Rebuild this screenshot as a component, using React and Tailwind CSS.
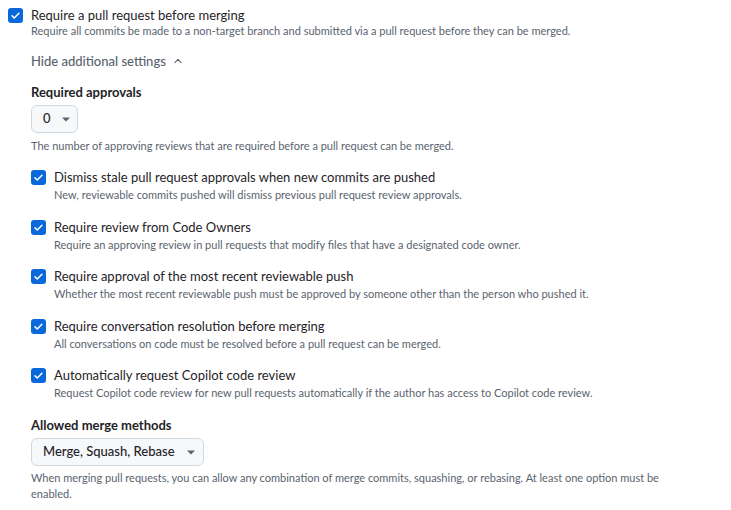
import React from "react";

function Check({ className = "" }) {
  return (
    <span className={`flex h-[15px] w-[15px] shrink-0 items-center justify-center rounded-[3px] bg-[#0969da] ${className}`}>
      <svg width="11" height="11" viewBox="0 0 16 16" fill="none">
        <path d="M3 8.5l3.2 3.2L13 4.8" stroke="white" strokeWidth="2.2" strokeLinecap="round" strokeLinejoin="round" />
      </svg>
    </span>
  );
}

function Caret() {
  return (
    <svg width="8" height="5" viewBox="0 0 8 5" className="shrink-0">
      <path d="M0 0.5h8L4 4.5z" fill="#59636e" />
    </svg>
  );
}

const rows = [
  ["Dismiss stale pull request approvals when new commits are pushed", "New, reviewable commits pushed will dismiss previous pull request review approvals."],
  ["Require review from Code Owners", "Require an approving review in pull requests that modify files that have a designated code owner."],
  ["Require approval of the most recent reviewable push", "Whether the most recent reviewable push must be approved by someone other than the person who pushed it."],
  ["Require conversation resolution before merging", "All conversations on code must be resolved before a pull request can be merged."],
  ["Automatically request Copilot code review", "Request Copilot code review for new pull requests automatically if the author has access to Copilot code review."],
];

export default function App() {
  return (
    <div className="h-[510px] w-[731px] overflow-hidden bg-white text-[#1f2328]" style={{ fontFamily: "Lato, sans-serif" }}>
      <div className="flex gap-[8px] pl-[8px] pt-[7px]">
        <Check className="mt-[1px]" />
        <div>
          <div className="text-[13px] leading-[16px]">Require a pull request before merging</div>
          <div className="text-[11px] leading-[16px] text-[#59636e]">
            Require all commits be made to a non-target branch and submitted via a pull request before they can be merged.
          </div>
        </div>
      </div>

      <div className="pl-[31px]">
        <div className="mt-[12px] flex items-center gap-[7px] text-[13px] leading-[20px] text-[#59636e]">
          <span className="font-medium">Hide additional settings</span>
          <svg width="10" height="10" viewBox="0 0 16 16" fill="none">
            <path d="M3 10.5L8 5.5l5 5" stroke="#59636e" strokeWidth="1.7" strokeLinecap="round" strokeLinejoin="round" />
          </svg>
        </div>

        <div className="mt-[11px] text-[13px] font-bold leading-[20px]">Required approvals</div>
        <div className="mt-[3px] flex h-[28px] w-[47px] items-center gap-[11px] rounded-[6px] border border-[#d1d9e0] bg-[#f6f8fa] pl-[11px] text-[13px] font-medium">
          <span>0</span>
          <Caret />
        </div>
        <div className="mt-[5px] text-[11px] leading-[16px] text-[#59636e]">
          The number of approving reviews that are required before a pull request can be merged.
        </div>

        <div className="mt-[15px] flex flex-col gap-[15.5px]">
          {rows.map(([t, d]) => (
            <div key={t} className="flex gap-[8px]">
              <Check className="mt-[1px]" />
              <div>
                <div className="text-[13px] leading-[16px]">{t}</div>
                <div className="mt-[2px] text-[11px] leading-[16px] text-[#59636e]">{d}</div>
              </div>
            </div>
          ))}
        </div>

        <div className="mt-[14px] text-[13px] font-bold leading-[20px]">Allowed merge methods</div>
        <div className="mt-[3px] flex h-[28px] w-[173px] items-center gap-[12px] whitespace-nowrap rounded-[6px] border border-[#d1d9e0] bg-[#f6f8fa] pl-[11px] text-[13px] font-medium">
          <span>Merge, Squash, Rebase</span>
          <Caret />
        </div>
        <div className="mt-[4px] text-[11px] leading-[16px] text-[#59636e]">
          When merging pull requests, you can allow any combination of merge commits, squashing, or rebasing. At least one option must be
          <br />
          enabled.
        </div>
      </div>
    </div>
  );
}
